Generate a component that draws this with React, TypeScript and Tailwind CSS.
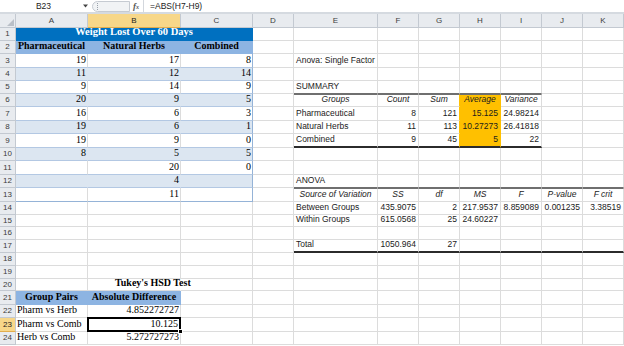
import { twMerge } from "tailwind-merge";

type Cell = { t?: string; c?: string; w?: string; skip?: boolean; sel?: boolean };

const colNames = ["A", "B", "C", "D", "E", "F", "G", "H", "I", "J", "K"];
const colW = ["w-[72px]", "w-[93px]", "w-[72px]", "w-[41px]", "w-[84px]", "w-[41px]", "w-[41px]", "w-[41px]", "w-[41px]", "w-[41px]", "w-[41px]"];
const rowH = [13, 13, 14, 13, 13, 13, 14, 13, 14, 13, 14, 13, 14, 13, 12, 13, 13, 13, 13, 12, 14, 13, 14, 13];
const hCls = (h: number) => (h === 14 ? "h-[14px]" : h === 12 ? "h-[12px]" : "h-[13px]");

const serif = "font-['Liberation_Serif','Times_New_Roman',serif] text-[10px] text-black";
const sans = "font-['Liberation_Sans',Arial,sans-serif] text-[8.5px] text-[#1b1b1b]";
const hdr = "font-['Liberation_Sans',Arial,sans-serif] text-[8px] text-[#3c3c3c] bg-[#e8ebef] border-r border-b border-[#c3c9d1]";

const grid: Cell[][] = rowH.map(() => colNames.map(() => ({})));
const add = (r: number, cols: number[], cls: string) =>
  cols.forEach((i) => {
    const cell = grid[r - 1][i];
    cell.c = twMerge(cell.c ?? "", cls);
  });
const put = (r: number, col: number, t: string, cls = "") => {
  grid[r - 1][col].t = t;
  add(r, [col], cls);
};

// left table: weight lost
put(1, 0, "Weight Lost Over 60 Days", "justify-center font-bold text-white text-[10.5px] bg-[#0070c0] border-[#0070c0]");
grid[0][0].w = "w-[237px]";
grid[0][1].skip = true;
grid[0][2].skip = true;
const head = "justify-center font-bold bg-[#8db4e2] border-[#8db4e2]";
put(2, 0, "Pharmaceutical", head);
put(2, 1, "Natural Herbs", head);
put(2, 2, "Combined", head);

const data = [
  ["19", "17", "8"],
  ["11", "12", "14"],
  ["9", "14", "9"],
  ["20", "9", "5"],
  ["16", "6", "3"],
  ["19", "6", "1"],
  ["19", "9", "0"],
  ["8", "5", "5"],
  ["", "20", "0"],
  ["", "4", ""],
  ["", "11", ""],
];
data.forEach((vals, k) => {
  const r = k + 3;
  vals.forEach((v, i) =>
    put(
      r,
      i,
      v,
      twMerge(
        "justify-end pr-[1px] border-b-[#b3c8e3]",
        r % 2 === 0 ? "bg-[#dce6f1] border-r-[#dce6f1]" : "",
        i === 2 ? "border-r-[#95b3d7]" : ""
      )
    )
  );
});
add(13, [0, 1, 2], "border-b-[#95b3d7]");

// tukey
put(20, 1, "Tukey's HSD Test", "font-bold pl-[27px] border-r-transparent");
const tk = "justify-center font-bold bg-[#8db4e2] border-[#8db4e2]";
put(21, 0, "Group Pairs", tk);
put(21, 1, "Absolute Difference", tk);
put(22, 0, "Pharm vs Herb", "pl-[1px]");
put(22, 1, "4.852272727", "justify-end pr-[1px]");
put(23, 0, "Pharm vs Comb", "pl-[1px]");
put(23, 1, "10.125", "justify-end pr-[2px] relative");
grid[22][1].sel = true;
put(24, 0, "Herb vs Comb", "pl-[1px]");
put(24, 1, "5.272727273", "justify-end pr-[1px]");

// anova output
put(3, 4, "Anova: Single Factor");
put(5, 4, "SUMMARY");
add(5, [4, 5, 6, 7, 8], "border-b-[#6f6f6f]");
["Groups", "Count", "Sum", "Average", "Variance"].forEach((t, k) =>
  put(6, 4 + k, t, "justify-center italic border-t border-t-[#6f6f6f]")
);
const summary = [
  ["Pharmaceutical", "8", "121", "15.125", "24.98214"],
  ["Natural Herbs", "11", "113", "10.27273", "26.41818"],
  ["Combined", "9", "45", "5", "22"],
];
summary.forEach((row, k) =>
  row.forEach((t, i) => put(7 + k, 4 + i, t, i === 0 ? "" : "justify-end"))
);
[6, 7, 8, 9].forEach((r) => {
  add(r, [7], "bg-[#ffc000] border-[#ffc000]");
  add(r, [6], "border-r-[#ffc000]");
});
add(6, [7], "border-t-[#6f6f6f]");
add(9, [4, 5, 6, 7, 8], "border-b-2 border-b-[#2b2b2b]");

put(12, 4, "ANOVA");
add(12, [4, 5, 6, 7, 8, 9, 10], "border-b-[#6f6f6f]");
["Source of Variation", "SS", "df", "MS", "F", "P-value", "F crit"].forEach((t, k) =>
  put(13, 4 + k, t, "justify-center italic border-t border-t-[#6f6f6f]")
);
const anova = [
  [14, ["Between Groups", "435.9075", "2", "217.9537", "8.859089", "0.001235", "3.38519"]],
  [15, ["Within Groups", "615.0568", "25", "24.60227"]],
  [17, ["Total", "1050.964", "27"]],
] as const;
anova.forEach(([r, row]) =>
  row.forEach((t, i) => put(r, 4 + i, t, i === 0 ? "" : "justify-end"))
);
add(17, [4, 5, 6, 7, 8, 9, 10], "border-b-2 border-b-[#2b2b2b]");

function FormulaBar() {
  return (
    <div className="h-[12px] flex items-center bg-white font-['Liberation_Sans',Arial,sans-serif] text-[8.5px] text-[#222]">
      <div className="w-[82px] pl-[5px] text-center leading-none">B23</div>
      <svg width="6" height="4" viewBox="0 0 6 4" className="ml-[1px]">
        <path d="M0 0.5h5l-2.5 3z" fill="#444" />
      </svg>
      <div className="ml-[3px] w-[38px] h-[11px] rounded-l-full rounded-r-[3px] border border-[#c6cbd2] bg-[#f1f3f5] flex items-center pl-[4px]">
        <div className="w-px h-[7px] border-l border-dotted border-[#9aa1aa]" />
      </div>
      <div className="ml-[3px] leading-none font-['Liberation_Serif',serif] italic font-bold text-[9px] text-[#555]">
        f<span className="text-[6px]">x</span>
      </div>
      <div className="ml-[4px] w-px h-[12px] bg-[#d3d7dd]" />
      <div className="ml-[6px] leading-none">=ABS(H7-H9)</div>
    </div>
  );
}

function Row({ r }: { r: number }) {
  return (
    <div className={`flex ${hCls(rowH[r - 1])}`}>
      <div
        className={twMerge(
          "w-[16px] shrink-0 flex items-center justify-center leading-none",
          hdr,
          r === 23 && "bg-[#f7d789] border-b-[#e2ad4c] text-[#222]"
        )}
      >
        {r}
      </div>
      {grid[r - 1].map((cell, i) =>
        cell.skip ? null : (
          <div
            key={i}
            className={twMerge(
              "shrink-0 flex items-end px-[2px] leading-none whitespace-nowrap border-r border-b border-[#dcdcdc]",
              i < 3 ? serif : sans,
              cell.w ?? colW[i],
              cell.c
            )}
          >
            {cell.t}
            {cell.sel && (
              <>
                <div className="absolute left-[-1px] top-[-1px] right-[-1px] bottom-[-1px] border-2 border-black" />
                <div className="absolute right-[-3px] bottom-[-3px] w-[5px] h-[5px] bg-black border border-white" />
              </>
            )}
          </div>
        )
      )}
    </div>
  );
}

export default function App() {
  return (
    <div className="w-[624px] h-[346px] overflow-hidden bg-white">
      <FormulaBar />
      <div className="h-[2px] bg-[#d5dae0]" />
      <div className="flex h-[14px]">
        <div className={twMerge("w-[16px] shrink-0 flex items-end justify-end p-[1px]", hdr)}>
          <svg width="7" height="7" viewBox="0 0 7 7">
            <path d="M7 0v7H0z" fill="#b9bfc7" />
          </svg>
        </div>
        {colNames.map((n, i) => (
          <div
            key={n}
            className={twMerge(
              "shrink-0 flex items-center justify-center leading-none",
              hdr,
              colW[i],
              i === 1 && "bg-[#f7d789] border-b-[#e2ad4c] text-[#222]"
            )}
          >
            {n}
          </div>
        ))}
      </div>
      {rowH.map((_, k) => (
        <Row key={k} r={k + 1} />
      ))}
    </div>
  );
}
